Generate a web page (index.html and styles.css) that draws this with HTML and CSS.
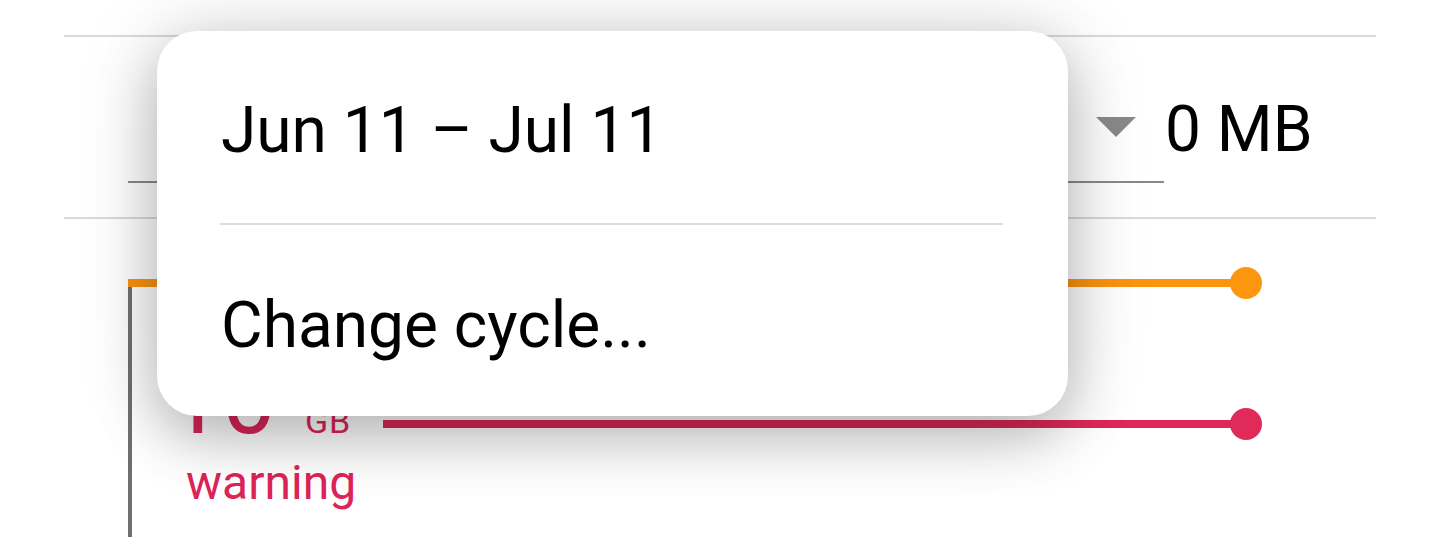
FILE: index.html
```html
<!DOCTYPE html>
<html lang="en">
<head>
<meta charset="utf-8">
<title>Data usage</title>
<link rel="stylesheet" href="styles.css">
</head>
<body>
<div class="screen">
  <div class="rule"></div>
  <div class="cycle-row">
    <div class="spinner">
      <span class="caret"></span>
    </div>
    <div class="usage">0 MB</div>
  </div>
  <div class="rule"></div>
  <div class="chart">
    <div class="limit-row">
      <div class="limit-line"></div>
      <div class="dot dot-orange"></div>
    </div>
    <div class="plot">
      <div class="warn-row">
        <div class="warn-label">
          <div class="amount"><span class="amount-num">10</span><span class="amount-unit">GB</span></div>
          <div class="warn-text">warning</div>
        </div>
        <div class="warn-track">
          <div class="warn-line"></div>
          <div class="dot dot-red"></div>
        </div>
      </div>
    </div>
  </div>

  <div class="popup">
    <div class="popup-item first">Jun 11 – Jul 11</div>
    <div class="popup-divider"></div>
    <div class="popup-item second">Change cycle...</div>
  </div>
</div>
</body>
</html>
```

FILE: styles.css
```css
html, body {
  margin: 0;
  padding: 0;
  background: #ffffff;
}

body {
  width: 1440px;
  height: 537px;
  overflow: hidden;
  font-family: Roboto, "Liberation Sans", sans-serif;
  color: #000;
}

.screen {
  position: relative;
  height: 537px;
  padding: 35px 64px 0 64px;
  box-sizing: border-box;
}

.rule {
  height: 2px;
  background: #d9d9d9;
}

.cycle-row {
  display: flex;
  align-items: flex-start;
  height: 180px;
  padding-left: 64px;
}

.spinner {
  width: 1036px;
  height: 146px;
  box-sizing: border-box;
  border-bottom: 2px solid #8a8a8a;
  display: flex;
  justify-content: flex-end;
  align-items: flex-start;
  padding-top: 80px;
  padding-right: 28px;
}

.caret {
  width: 0;
  height: 0;
  border-left: 20px solid transparent;
  border-right: 20px solid transparent;
  border-top: 20px solid #8a8a8a;
}

.usage {
  font-size: 64px;
  line-height: 64px;
  margin-top: 61px;
  margin-left: 1px;
  white-space: nowrap;
}

.chart {
  margin-left: 64px;
  padding-top: 48px;
}

.limit-row {
  display: flex;
  align-items: center;
  height: 32px;
}

.limit-line {
  width: 1103px;
  height: 8px;
  background: #fb9410;
  filter: blur(0.6px);
}

.dot {
  width: 32px;
  height: 32px;
  border-radius: 50%;
  margin-left: -1px;
  filter: blur(0.6px);
}

.dot-orange { background: #fd960f; }
.dot-red { background: #e02a5a; }

.plot {
  margin-top: -12px;
  border-left: 4px solid #6d7073;
  height: 260px;
}

.warn-row {
  display: flex;
  align-items: flex-start;
  padding-top: 65px;
}

.warn-label {
  width: 198px;
  margin-left: 53px;
  color: #dc2559;
}

.amount {
  height: 96px;
  line-height: 96px;
  white-space: nowrap;
  margin-left: -17px;
}

.amount-num {
  font-size: 96px;
}

.amount-unit {
  font-size: 34px;
  margin-left: 29px;
  letter-spacing: 1px;
}

.warn-text {
  font-size: 48px;
  line-height: 70px;
  margin-left: 1px;
}

.warn-track {
  display: flex;
  align-items: center;
  height: 32px;
  margin-top: 56px;
}

.warn-line {
  width: 848px;
  height: 8px;
  background: #de2858;
  filter: blur(0.6px);
}

.popup {
  position: absolute;
  left: 157px;
  top: 31px;
  width: 911px;
  height: 385px;
  background: #ffffff;
  border-radius: 40px;
  box-shadow: 0 20px 58px rgba(0, 0, 0, 0.26), 0 0 90px rgba(0, 0, 0, 0.11);
  z-index: 10;
}

.popup-item {
  font-size: 64px;
  line-height: 64px;
  padding-left: 64px;
  box-sizing: border-box;
  white-space: nowrap;
}

.popup-item.first {
  height: 192px;
  padding-top: 68px;
}

.popup-item.second {
  height: 191px;
  padding-top: 69px;
}

.popup-divider {
  height: 2px;
  width: 783px;
  margin-left: 63px;
  background: #dcdcdc;
}
```
